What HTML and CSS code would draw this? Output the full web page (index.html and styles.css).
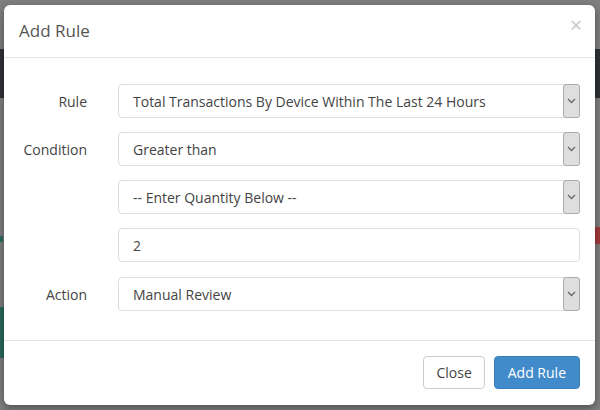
FILE: index.html
```html
<!DOCTYPE html>
<html lang="en">
<head>
    <meta charset="UTF-8">
    <title>Add Rule</title>
    <link rel="stylesheet" href="styles.css">
</head>
<body>

    <div class="page">
        <div class="page-nav"></div>
        <div class="page-row">
            <span class="tag-teal"></span>
            <span class="btn-red"></span>
        </div>
        <div class="page-green"></div>
    </div>

    <div class="modal-window">
        <div class="modal-header">
            <h4>Add Rule</h4>
            <span class="close">&times;</span>
        </div>

        <div class="modal-body">
            <div class="form-row">
                <label>Rule</label>
                <div class="select-box">
                    <select><option>Total Transactions By Device Within The Last 24 Hours</option></select>
                    <span class="caret"><svg width="9" height="6" viewBox="0 0 9 6"><path d="M1 1l3.5 3.5L8 1" fill="none" stroke="#666" stroke-width="1.3"/></svg></span>
                </div>
            </div>
            <div class="form-row">
                <label>Condition</label>
                <div class="select-box">
                    <select><option>Greater than</option></select>
                    <span class="caret"><svg width="9" height="6" viewBox="0 0 9 6"><path d="M1 1l3.5 3.5L8 1" fill="none" stroke="#666" stroke-width="1.3"/></svg></span>
                </div>
            </div>
            <div class="form-row">
                <label></label>
                <div class="select-box">
                    <select><option>-- Enter Quantity Below --</option></select>
                    <span class="caret"><svg width="9" height="6" viewBox="0 0 9 6"><path d="M1 1l3.5 3.5L8 1" fill="none" stroke="#666" stroke-width="1.3"/></svg></span>
                </div>
            </div>
            <div class="form-row">
                <label></label>
                <input class="text-box" type="text" value="2">
            </div>
            <div class="form-row">
                <label>Action</label>
                <div class="select-box">
                    <select><option>Manual Review</option></select>
                    <span class="caret"><svg width="9" height="6" viewBox="0 0 9 6"><path d="M1 1l3.5 3.5L8 1" fill="none" stroke="#666" stroke-width="1.3"/></svg></span>
                </div>
            </div>
        </div>

        <div class="modal-footer">
            <button class="btn">Close</button>
            <button class="btn btn-primary">Add Rule</button>
        </div>
    </div>

</body>
</html>
```

FILE: styles.css
```css
body {
    margin: 0;
    background: #7f7f7f;
    font-family: "Open Sans", "Liberation Sans", sans-serif;
    font-size: 14px;
    color: #333;
    height: 410px;
    overflow: hidden;
}
.page { padding-top: 49px; }
.page-nav { height: 49px; background: #2f3236; }
.page-row {
    display: flex;
    justify-content: space-between;
    align-items: flex-start;
    height: 160px;
    padding-top: 129px;
    box-sizing: border-box;
}
.tag-teal { width: 3px; height: 6px; margin-top: 9px; background: #2c6e62; }
.btn-red { width: 20px; height: 17px; background: #a23a3c; }
.page-green { height: 51px; margin-top: 49px; width: 40px; background: #27695a; }

.modal-window {
    position: absolute;
    left: 4px;
    top: 5px;
    width: 591px;
    height: 400px;
    background: #fff;
    border-radius: 6px;
    box-shadow: 0 3px 9px rgba(0, 0, 0, 0.4);
    display: flex;
    flex-direction: column;
}
.modal-header {
    height: 53px;
    box-sizing: border-box;
    padding: 0 15px;
    border-bottom: 1px solid #e5e5e5;
    display: flex;
    align-items: center;
    justify-content: space-between;
}
.modal-header h4 {
    margin: 0 0 1px;
    font-size: 17px;
    font-weight: normal;
    color: #555;
}
.close {
    font-size: 21px;
    color: #c8c8c8;
    line-height: 1;
    margin: -12px -2px 0 0;
}
.modal-body { padding: 26px 15px 16px; }
.form-row {
    display: flex;
    align-items: center;
    margin-bottom: 14px;
}
.form-row:last-child { margin-top: 15px; }
.form-row label {
    width: 68px;
    margin-right: 31px;
    text-align: right;
    color: #444;
}
.select-box, .text-box {
    width: 462px;
    height: 34px;
    box-sizing: border-box;
    border: 1px solid #ddd;
    border-radius: 4px;
    background: #fff;
}
.select-box { display: flex; }
.select-box select {
    flex: 1;
    appearance: none;
    -webkit-appearance: none;
    border: none;
    background: transparent;
    padding: 0 0 0 14px;
    font: inherit;
    color: #444;
    outline: none;
}
.caret {
    width: 15px;
    margin: -1px -1px -1px 0;
    border: 1px solid #acacac;
    border-radius: 3px;
    background: #dedede;
    display: flex;
    align-items: center;
    justify-content: center;
}
.text-box {
    padding: 0 14px;
    font: inherit;
    color: #444;
    outline: none;
}
.modal-footer {
    border-top: 1px solid #e5e5e5;
    margin-top: -1px;
    padding: 15px;
    display: flex;
    justify-content: flex-end;
    gap: 9px;
}
.btn {
    height: 33px;
    padding: 0 12px;
    border: 1px solid #ccc;
    border-radius: 4px;
    background: #fff;
    font: inherit;
    color: #444;
}
.btn-primary {
    background: #428bca;
    border-color: #3b80bd;
    color: #fff;
    padding: 0 13px;
}
```
